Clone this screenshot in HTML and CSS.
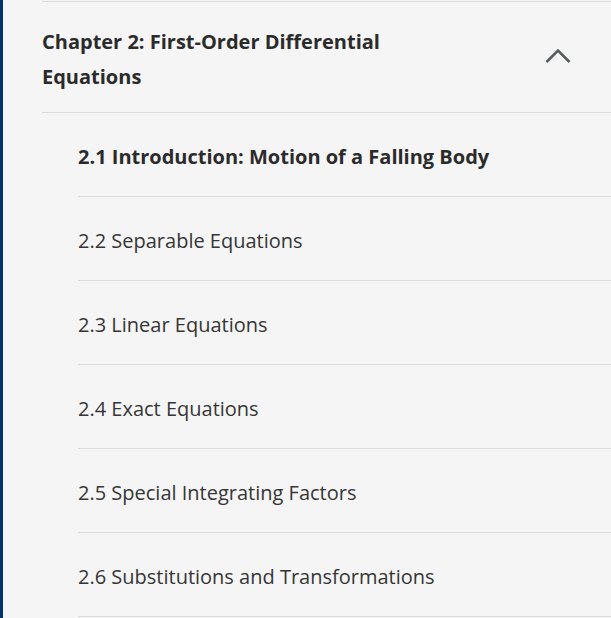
FILE: index.html
```
<!DOCTYPE html>
<html>
<head>
<meta charset="utf-8">
<link rel="stylesheet" href="styles.css">
</head>
<body>
<div class="page">
  <div class="chapter">
    <div class="chapter-head">
      <div class="chapter-title">Chapter 2: First-Order Differential Equations</div>
      <svg class="chevron" width="26" height="16" viewBox="0 0 26 16"><path d="M1.5 14 L13 2.5 L24.5 14" fill="none" stroke="#575c5e" stroke-width="2.6" stroke-linecap="butt"/></svg>
    </div>
    <ul class="sections">
      <li class="section active">2.1 Introduction: Motion of a Falling Body</li>
      <li class="section">2.2 Separable Equations</li>
      <li class="section">2.3 Linear Equations</li>
      <li class="section">2.4 Exact Equations</li>
      <li class="section">2.5 Special Integrating Factors</li>
      <li class="section">2.6 Substitutions and Transformations</li>
    </ul>
  </div>
</div>
</body>
</html>
```
FILE: styles.css
```
html, body {
  margin: 0;
  padding: 0;
  background: #f5f5f5;
}
.page {
  min-height: 618px;
  border-left: 3px solid #06326b;
  padding-left: 39px;
  padding-top: 1px;
  font-family: "Open Sans", "Liberation Sans", sans-serif;
  color: #333;
  box-sizing: border-box;
}
.chapter-head {
  border-top: 1px solid #dcdcdc;
  border-bottom: 1px solid #dcdcdc;
  display: flex;
  align-items: center;
  justify-content: space-between;
  padding: 22px 0 18px 0;
}
.chapter-title {
  font-size: 20px;
  font-weight: 700;
  line-height: 35px;
  width: 380px;
  color: #2b2b2b;
}
.chevron {
  margin-right: 40px;
  margin-top: -6px;
}
.sections {
  list-style: none;
  margin: 0 0 0 36px;
  padding: 0;
}
.section {
  border-bottom: 1px solid #dcdcdc;
  display: flex;
  align-items: center;
  font-size: 20px;
  color: #363636;
  padding-top: 3px;
  box-sizing: border-box;
  height: 84px;
}
.section.active {
  font-weight: 700;
  color: #2b2b2b;
}
```
